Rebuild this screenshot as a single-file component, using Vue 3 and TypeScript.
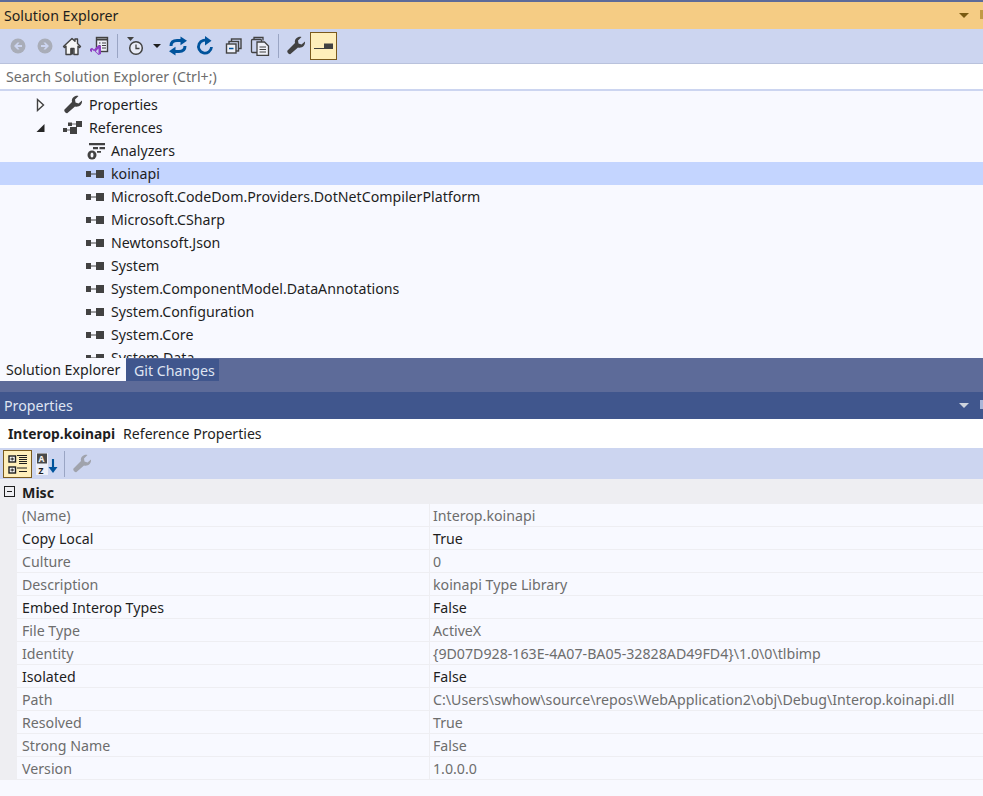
<script setup lang="ts">
interface TreeRow {
  label: string
  depth: number
  icon: 'wrench' | 'refs' | 'analyzer' | 'ref'
  arrow?: 'open' | 'closed'
  selected?: boolean
}

interface PropRow {
  name: string
  value: string
  editable?: boolean
}

const wrenchPath = 'M19 5.500l-3.500 3-3-1-.5-3L15.500 1C12.500 0 8 2.500 9 7L1.500 14.500C.5 16 3 19 4.500 18L12 11.500C16 12.500 19.500 9.500 19 5.500z'

const treeRows: TreeRow[] = [
  { label: 'Properties', depth: 0, icon: 'wrench', arrow: 'closed' },
  { label: 'References', depth: 0, icon: 'refs', arrow: 'open' },
  { label: 'Analyzers', depth: 1, icon: 'analyzer' },
  { label: 'koinapi', depth: 1, icon: 'ref', selected: true },
  { label: 'Microsoft.CodeDom.Providers.DotNetCompilerPlatform', depth: 1, icon: 'ref' },
  { label: 'Microsoft.CSharp', depth: 1, icon: 'ref' },
  { label: 'Newtonsoft.Json', depth: 1, icon: 'ref' },
  { label: 'System', depth: 1, icon: 'ref' },
  { label: 'System.ComponentModel.DataAnnotations', depth: 1, icon: 'ref' },
  { label: 'System.Configuration', depth: 1, icon: 'ref' },
  { label: 'System.Core', depth: 1, icon: 'ref' },
  { label: 'System.Data', depth: 1, icon: 'ref' },
]

const propRows: PropRow[] = [
  { name: '(Name)', value: 'Interop.koinapi' },
  { name: 'Copy Local', value: 'True', editable: true },
  { name: 'Culture', value: '0' },
  { name: 'Description', value: 'koinapi Type Library' },
  { name: 'Embed Interop Types', value: 'False', editable: true },
  { name: 'File Type', value: 'ActiveX' },
  { name: 'Identity', value: '{9D07D928-163E-4A07-BA05-32828AD49FD4}\\1.0\\0\\tlbimp' },
  { name: 'Isolated', value: 'False', editable: true },
  { name: 'Path', value: 'C:\\Users\\swhow\\source\\repos\\WebApplication2\\obj\\Debug\\Interop.koinapi.dll' },
  { name: 'Resolved', value: 'True' },
  { name: 'Strong Name', value: 'False' },
  { name: 'Version', value: '1.0.0.0' },
]
</script>

<template>
  <div class="app">
    <div class="panel-title active">
      <span>Solution Explorer</span>
      <i class="caret dark" />
      <i class="title-pin dark" />
    </div>

    <div class="toolbar">
      <svg class="tool" width="20" height="20" viewBox="0 0 20 20">
        <circle cx="10" cy="10" r="7.500" fill="#a9adb8" />
        <path d="M14 9H9.500l2-2.500H9.500L6 10l3.500 3.500h2l-2-2.500H14z" fill="#ccd5f0" />
      </svg>
      <svg class="tool" width="20" height="20" viewBox="0 0 20 20">
        <circle cx="10" cy="10" r="7.500" fill="#a9adb8" />
        <path d="M6 9h4.500l-2-2.500h2L14 10l-3.500 3.500h-2l2-2.500H6z" fill="#ccd5f0" />
      </svg>
      <svg class="tool" width="20" height="20" viewBox="0 0 20 20">
        <path d="M1.500 10.500 10 2.500l3 2.800V3h2.500v4.500l3 3-1 1-1.500-1.300V18.500h-4v-6h-3v6H4v-8.300L2.500 11.500z" fill="#f6f6f6" stroke="#424242" stroke-width="1.400" stroke-linejoin="round" />
        <rect x="8.500" y="12.500" width="3" height="6" fill="#424242" />
      </svg>
      <svg class="tool" width="20" height="20" viewBox="0 0 20 20">
        <rect x="7.500" y="1.500" width="11" height="14" fill="#eef0f8" stroke="#424242" stroke-width="1.400" />
        <path d="M8 3.500h10" stroke="#424242" stroke-width="2" />
        <path d="M10 7h1.500M13 7h4M10 9.500h1.500M13 9.500h4M13 12h4" stroke="#424242" />
        <path d="M1 13l2-1.200 2 1.700 4.500-4.500 2.500 1v8l-2.500 1-4.500-4.500-2 1.700-2-1.200z" fill="#8f3fc4" />
        <path d="M3 13.600l1.800 1.600-1.800 1.600zM9.500 12.500v5.400L6.800 15.200z" fill="#ccd5f0" />
      </svg>
      <span class="sep" />
      <svg class="tool clock" width="24" height="20" viewBox="0 0 24 20">
        <path d="M2 1h7L5.500 5z" fill="#424242" />
        <circle cx="11" cy="12" r="6.300" fill="#e8ebf6" stroke="#424242" stroke-width="1.500" />
        <path d="M11 8.500V12.500h3.500" fill="none" stroke="#424242" stroke-width="1.300" />
      </svg>
      <i class="caret small" />
      <svg class="tool" width="20" height="20" viewBox="0 0 20 20">
        <path d="M3 10C3 6 5.500 4.500 9 4.500h4.500" fill="none" stroke="#00539c" stroke-width="3" />
        <path d="M12.500.5 19 4.800l-6.500 4.500z" fill="#00539c" />
        <path d="M17 10c0 4-2.500 5.500-6 5.500H6.500" fill="none" stroke="#00539c" stroke-width="3" />
        <path d="M7.500 10.800 1 15.300l6.500 4.300z" fill="#00539c" />
      </svg>
      <svg class="tool refresh" width="20" height="20" viewBox="0 0 20 20">
        <path d="M13.800 5.300A6.500 6.500 0 1 0 16.500 11" fill="none" stroke="#00539c" stroke-width="2.800" />
        <path d="M10 0v9.500l6.500-4.700z" fill="#00539c" />
      </svg>
      <svg class="tool copy" width="20" height="20" viewBox="0 0 20 20">
        <rect x="7.500" y="3" width="9.500" height="9.500" fill="#ccd5f0" stroke="#424242" stroke-width="1.400" />
        <rect x="5" y="5.500" width="9.500" height="9.500" fill="#ccd5f0" stroke="#424242" stroke-width="1.400" />
        <rect x="2.500" y="8" width="9.500" height="9" fill="#eef0f8" stroke="#424242" stroke-width="1.400" />
        <path d="M5 12.500h4.500" stroke="#00539c" stroke-width="1.500" />
      </svg>
      <svg class="tool" width="20" height="20" viewBox="0 0 20 20">
        <path d="M4 3.500V1.500h9v3" fill="none" stroke="#424242" stroke-width="1.300" />
        <rect x="1.500" y="3.500" width="10" height="13" rx="1" fill="#ccd5f0" stroke="#424242" stroke-width="1.300" />
        <path d="M7 6h7.500L18.500 10v9.500H7z" fill="#eef0f8" stroke="#424242" stroke-width="1.300" />
        <path d="M9.500 11H16M9.500 13.500H16M9.500 16H16" stroke="#424242" stroke-width="1.200" />
      </svg>
      <span class="sep" />
      <svg class="tool" width="20" height="20" viewBox="0 0 20 20">
        <path :d="wrenchPath" fill="#424242" />
      </svg>
      <button class="pin" aria-label="Pin">
        <svg width="22" height="14" viewBox="0 0 22 14">
          <path d="M1 9.500h11" stroke="#424242" />
          <rect x="11" y="4.500" width="9" height="5.500" fill="#424242" />
        </svg>
      </button>
    </div>

    <div class="search">Search Solution Explorer (Ctrl+;)</div>

    <div class="tree">
      <div
        v-for="row in treeRows"
        :key="row.label"
        class="tree-row"
        :class="{ selected: row.selected, nested: row.depth === 1 }"
      >
        <span v-if="row.depth === 0" class="arrow-slot">
          <svg v-if="row.arrow === 'closed'" width="9" height="14" viewBox="0 0 9 14">
            <path d="M1.500 1.500 7.500 7l-6 5.500z" fill="#fff" stroke="#424242" stroke-width="1.400" />
          </svg>
          <svg v-else width="9" height="14" viewBox="0 0 9 14">
            <path d="M8.500 3v8H.500z" fill="#262626" />
          </svg>
        </span>
        <span class="tree-icon">
          <svg v-if="row.icon === 'wrench'" width="20" height="20" viewBox="0 0 20 20">
            <path :d="wrenchPath" fill="#424242" />
          </svg>
          <svg v-else-if="row.icon === 'refs'" width="20" height="14" viewBox="0 0 20 14">
            <rect x="0" y="7" width="4" height="4" fill="#424242" />
            <rect x="7" y="6" width="7" height="7" fill="#424242" />
            <rect x="5" y="1.500" width="4" height="3.500" fill="#424242" />
            <rect x="13" y="0" width="6" height="6" fill="#424242" />
            <path d="M4 9h3M9 3h4" stroke="#424242" stroke-width="0.800" />
          </svg>
          <svg v-else-if="row.icon === 'analyzer'" width="20" height="20" viewBox="0 0 20 20">
            <path d="M3 2h16v2.200H3zM7 6h5v2.200H7zM13.500 6H19v2.200h-5.500zM11 10h4v1.800h-4z" fill="#424242" />
            <circle cx="6" cy="14" r="4.500" fill="#424242" />
            <ellipse cx="6" cy="14" rx="1.500" ry="2.600" fill="#f8f9ff" />
          </svg>
          <svg v-else width="20" height="12" viewBox="0 0 20 12">
            <rect x="0" y="3" width="5" height="6" fill="#424242" />
            <path d="M5 6h5" stroke="#424242" />
            <rect x="10" y="2" width="8" height="8" fill="#424242" />
          </svg>
        </span>
        <span class="tree-label">{{ row.label }}</span>
      </div>
    </div>

    <div class="tabs">
      <div class="tab current">Solution Explorer</div>
      <div class="tab other">Git Changes</div>
    </div>
    <div class="tabs-gap" />

    <div class="panel-title blue">
      <span>Properties</span>
      <i class="caret light" />
      <i class="title-pin light" />
    </div>

    <div class="object-line">
      <strong>Interop.koinapi</strong>
      <span>Reference Properties</span>
    </div>

    <div class="props-toolbar">
      <button class="cat-btn" aria-label="Categorized">
        <svg width="22" height="22" viewBox="0 0 22 22">
          <rect x="2" y="3" width="6.500" height="6" fill="#f4f4f4" stroke="#1e1e1e" stroke-width="1.400" />
          <path d="M3.500 6h3.500M5.200 4.500v3" stroke="#1e1e1e" />
          <rect x="2" y="14" width="6.500" height="6" fill="#f4f4f4" stroke="#1e1e1e" stroke-width="1.400" />
          <path d="M3.500 17h3.500M5.200 15.500v3" stroke="#1e1e1e" />
          <path d="M10 2.500h10M12 4.500h8M12 6.500h8M12 8.500h8M12 10.500h8M10 15h10M12 18.500h8" stroke="#1e1e1e" />
        </svg>
      </button>
      <svg class="az" width="24" height="24" viewBox="0 0 24 24">
        <rect x="1" y="1" width="12" height="22" fill="#eef0f8" />
        <rect x="2" y="1.500" width="10" height="10" fill="#4a4a4a" />
        <text x="3.500" y="9.500" class="az-letter light">A</text>
        <text x="3.500" y="21.500" class="az-letter">Z</text>
        <path d="M18 7v12" stroke="#eef0f8" stroke-width="4" />
        <path d="M18 7v11" stroke="#00539c" stroke-width="2.400" />
        <path d="M13.500 15h9L18 21z" fill="#00539c" />
      </svg>
      <span class="sep tall" />
      <svg class="muted-wrench" width="20" height="20" viewBox="0 0 20 20">
        <path :d="wrenchPath" fill="#a0a3ac" />
      </svg>
    </div>

    <div class="grid">
      <div class="cat-row">
        <span class="plus-box" />
        <strong>Misc</strong>
      </div>
      <div v-for="row in propRows" :key="row.name" class="prop-row">
        <div class="prop-name" :class="{ editable: row.editable }">{{ row.name }}</div>
        <div class="prop-value" :class="{ editable: row.editable }">{{ row.value }}</div>
      </div>
    </div>
  </div>
</template>

<style>
html,
body {
  margin: 0;
  background: #f8f9ff;
}
</style>

<style scoped>
.app {
  width: 983px;
  height: 796px;
  overflow: hidden;
  background: #f8f9ff;
  color: #1e1e1e;
  font-family: "Noto Sans", "Open Sans", sans-serif;
  font-size: 14.2px;
  box-sizing: border-box;
  border-top: 2px solid #5d6b99;
}

.panel-title {
  height: 27px;
  padding-left: 4px;
  display: flex;
  align-items: center;
  box-sizing: border-box;
}

.panel-title > span {
  flex: 1;
}

.panel-title.active {
  background: #f5cc84;
  color: #1e1e1e;
}

.panel-title.blue {
  background: #40568d;
  color: #dfe4f2;
}

.caret {
  width: 0;
  height: 0;
  border-left: 5px solid transparent;
  border-right: 5px solid transparent;
  margin-right: 11px;
}

.caret.dark {
  border-top: 5px solid #7a5a10;
}

.caret.light {
  border-top: 5px solid #ced4dd;
}

.caret.small {
  border-left-width: 4px;
  border-right-width: 4px;
  border-top: 4px solid #1e1e1e;
  margin: 0 0 0 1px;
}

.title-pin {
  width: 3px;
  height: 9px;
  margin-top: -3px;
}

.title-pin.dark {
  background: #c29a45;
}

.title-pin.light {
  background: #a9b6d8;
}

.toolbar {
  height: 34px;
  background: #ccd5f0;
  display: flex;
  align-items: center;
  padding-left: 8px;
  box-sizing: border-box;
}

.tool {
  margin-right: 7px;
  flex: none;
}

.tool.clock {
  margin-right: 3px;
}

.tool.refresh {
  margin-right: 9px;
}

.tool.copy {
  margin-right: 6px;
}

.caret.small + .tool {
  margin-left: 7px;
}

.sep {
  width: 1px;
  height: 24px;
  background: #9aa5c4;
  margin: 0 7px 0 1px;
}

.pin {
  width: 27px;
  height: 28px;
  padding: 0;
  margin-left: -3px;
  border: 1px solid #7a5a1e;
  background: #ffefbb;
  display: flex;
  align-items: center;
  justify-content: center;
}

.search {
  height: 25px;
  background: #fff;
  border-top: 1px solid #b9c2dc;
  border-bottom: 2px solid #ccd5f0;
  padding-left: 6px;
  line-height: 25px;
  color: #6d6d6d;
}

.tree {
  height: 267px;
  padding-top: 2px;
  box-sizing: border-box;
  overflow: hidden;
}

.tree-row {
  height: 23px;
  display: flex;
  align-items: center;
  padding-left: 36px;
  flex: none;
}

.tree-row.nested {
  padding-left: 86px;
}

.tree-row.selected {
  background: #c4d5ff;
}

.arrow-slot {
  width: 27px;
  display: flex;
  align-items: center;
  flex: none;
}

.tree-icon {
  width: 26px;
  display: flex;
  align-items: center;
  flex: none;
}

.nested .tree-icon {
  width: 25px;
}

.tabs {
  height: 23px;
  background: #5d6b99;
  display: flex;
}

.tab {
  line-height: 24px;
  box-sizing: border-box;
}

.tab.current {
  width: 126px;
  background: #f8f9ff;
  padding-left: 6px;
}

.tab.other {
  width: 93px;
  height: 22px;
  margin-top: 1px;
  line-height: 23px;
  background: #40568d;
  color: #dfe4f2;
  padding-left: 8px;
}

.tabs-gap {
  height: 11px;
  background: #5d6b99;
}

.object-line {
  height: 29px;
  background: #fff;
  display: flex;
  align-items: center;
  gap: 8px;
  padding-left: 8px;
}

.object-line strong {
  font-size: 13.8px;
}

.object-line span {
  font-size: 14.1px;
}

.props-toolbar {
  height: 31px;
  background: #ccd5f0;
  display: flex;
  align-items: center;
  padding-left: 3px;
}

.cat-btn {
  width: 29px;
  height: 28px;
  padding: 0;
  border: 1px solid #7a5a1e;
  background: #ffefbb;
  display: flex;
  align-items: center;
  justify-content: center;
}

.az {
  margin-left: 3px;
}

.az-letter {
  font-size: 8.5px;
  font-weight: 700;
  fill: #1e1e1e;
}

.az-letter.light {
  fill: #f4f4f4;
}

.sep.tall {
  height: 26px;
  margin: 0 7px 0 5px;
}

.cat-row {
  height: 25px;
  background: #eeeef2;
  display: flex;
  align-items: center;
  padding-left: 4px;
}

.cat-row strong {
  margin-left: 7px;
  padding-top: 2px;
}

.plus-box {
  width: 9px;
  height: 9px;
  border: 1px solid #1e1e1e;
  position: relative;
}

.plus-box::after {
  content: "";
  position: absolute;
  left: 2px;
  right: 2px;
  top: 4px;
  height: 1px;
  background: #1e1e1e;
}

.prop-row {
  height: 23px;
  display: grid;
  grid-template-columns: 430px 1fr;
  border-left: 17px solid #eeeef2;
  box-sizing: border-box;
}

.prop-row > div {
  line-height: 24px;
  height: 23px;
  box-sizing: border-box;
  color: #6d6d6d;
  border-bottom: 1px solid #eeeef2;
  white-space: nowrap;
  overflow: hidden;
}

.prop-row > .editable {
  color: #1e1e1e;
}

.prop-name {
  padding-left: 5px;
  width: 413px;
  box-sizing: border-box;
  border-right: 1px solid #eeeef2;
}

.prop-value {
  padding-left: 3px;
  margin-left: -17px;
}
</style>
